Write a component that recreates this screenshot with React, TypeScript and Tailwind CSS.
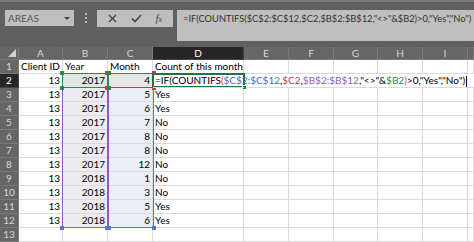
import React from 'react';

const cols = [
  { key: 'A', w: 44 },
  { key: 'B', w: 45 },
  { key: 'C', w: 45 },
  { key: 'D', w: 91 },
  { key: 'E', w: 45 },
  { key: 'F', w: 45 },
  { key: 'G', w: 44 },
  { key: 'H', w: 45 },
  { key: 'I', w: 45 },
  { key: 'J', w: 6 },
];

const rows: [number, number, number, string][] = [
  [13, 2017, 4, ''],
  [13, 2017, 5, 'Yes'],
  [13, 2017, 6, 'Yes'],
  [13, 2017, 7, 'No'],
  [13, 2017, 8, 'No'],
  [13, 2017, 8, 'No'],
  [13, 2017, 12, 'No'],
  [13, 2018, 1, 'No'],
  [13, 2018, 3, 'No'],
  [13, 2018, 5, 'Yes'],
  [13, 2018, 6, 'Yes'],
];

const gridCols = 'grid-cols-[19px_44px_45px_45px_91px_45px_45px_44px_45px_45px_6px]';
const font = { fontFamily: 'Lato, "Liberation Sans", sans-serif' };

const Formula = () => (
  <>
    =IF(COUNTIFS<span className="text-[#d0344a]">(</span>
    <span className="text-[#3b6fd0]">$C$2:$C$12</span>,
    <span className="text-[#d0344a]">$C2</span>,
    <span className="text-[#8a5cc2]">$B$2:$B$12</span>,"&lt;&gt;"&amp;
    <span className="text-[#2e8b3e]">$B2</span>
    <span className="text-[#d0344a]">)</span>&gt;0,"Yes","No")
  </>
);

const Box = ({ left, top, width, height, color }: { left: number; top: number; width: number; height: number; color: string }) => (
  <div className="absolute pointer-events-none" style={{ left, top, width, height }}>
    <div className="absolute inset-0 border" style={{ borderColor: color }} />
    {[
      'left-[-2px] top-[-2px]',
      'right-[-2px] top-[-2px]',
      'left-[-2px] bottom-[-2px]',
      'right-[-2px] bottom-[-2px]',
    ].map((pos) => (
      <div key={pos} className={`absolute w-[4px] h-[4px] ${pos}`} style={{ backgroundColor: color }} />
    ))}
  </div>
);

const Cell = ({ children, className = '' }: { children?: React.ReactNode; className?: string }) => (
  <div className={`h-[14px] border-r border-b border-[#dadada] text-[10px] leading-[13px] px-[2px] text-black whitespace-nowrap ${className}`}>
    {children}
  </div>
);

export default function App() {
  return (
    <div className="w-[474px] h-[242px] overflow-hidden bg-white" style={font}>
      {/* toolbar */}
      <div className="h-[47px] bg-[#606060] border-t-2 border-[#7c7c7c] relative flex items-start pt-[8px] pl-[5px]">
        <div className="w-[69px] h-[16px] bg-[#bfbfbf] flex items-center justify-between pl-[3px] pr-[4px] text-[10px] text-[#555]">
          <span>AREAS</span>
          <span className="w-0 h-0 border-l-[3px] border-r-[3px] border-t-[3px] border-l-transparent border-r-transparent border-t-[#444]" />
        </div>
        <div className="w-[23px] flex flex-col items-center gap-[2px] pt-[3px]">
          <span className="w-[2px] h-[2px] bg-[#bbb]" />
          <span className="w-[2px] h-[2px] bg-[#bbb]" />
          <span className="w-[2px] h-[2px] bg-[#bbb]" />
        </div>
        <div className="w-[76px] h-[17px] bg-[#bfbfbf] flex items-center justify-around px-[4px] text-[#444]">
          <svg width="9" height="9" viewBox="0 0 9 9"><path d="M1 1L8 8M8 1L1 8" stroke="#444" strokeWidth="1.4" /></svg>
          <svg width="11" height="9" viewBox="0 0 11 9"><path d="M1 4.5L4 7.5L10 1" stroke="#444" strokeWidth="1.6" fill="none" /></svg>
          <span className="italic text-[11px] leading-none" style={{ fontFamily: '"Liberation Serif", serif' }}>f<span className="text-[8px]">x</span></span>
        </div>
        <div className="ml-[4px] flex-1 min-w-0 h-[31px] bg-[#bfbfbf] text-[9.3px] leading-[17px] pl-[6px] text-[#333] whitespace-nowrap overflow-hidden">
          =IF(COUNTIFS($C$2:$C$12,$C2,$B$2:$B$12,"&lt;&gt;"&amp;$B2)&gt;0,"Yes","No")
        </div>
      </div>

      {/* sheet */}
      <div className={`relative grid ${gridCols}`}>
        {/* header row */}
        <div className="h-[13px] bg-[#666] border-r border-b border-[#7a7a7a] relative">
          <span className="absolute right-[2px] bottom-[2px] w-0 h-0" style={{ borderBottom: '8px solid #cfcfcf', borderLeft: '8px solid transparent' }} />
        </div>
        {cols.map((c) => (
          <div
            key={c.key}
            className={`h-[13px] border-r border-b text-[10px] leading-[12px] text-center ${c.key === 'D' ? 'bg-[#262626] text-white border-[#444]' : 'bg-[#666] text-[#d6d6d6] border-[#7a7a7a]'}`}
          >
            {c.key !== 'J' ? c.key : ''}
          </div>
        ))}

        {/* row 1 */}
        <div className="h-[14px] bg-[#666] border-r border-b border-[#7a7a7a] text-[10px] leading-[13px] text-center text-[#d6d6d6]">1</div>
        <Cell>Client ID</Cell>
        <Cell>Year</Cell>
        <Cell>Month</Cell>
        <Cell>Count of this month</Cell>
        {cols.slice(4).map((c) => <Cell key={c.key} />)}

        {rows.map((r, i) => {
          const n = i + 2;
          const active = n === 2;
          return (
            <React.Fragment key={n}>
              <div className={`h-[14px] border-r border-b text-[10px] leading-[13px] text-center ${active ? 'bg-[#262626] text-white border-[#444]' : 'bg-[#666] text-[#d6d6d6] border-[#7a7a7a]'}`}>{n}</div>
              <Cell className="text-right">{r[0]}</Cell>
              <Cell className={`text-right ${active ? 'bg-[#e2e6e2]' : 'bg-[#eeebf3]'}`}>{r[1]}</Cell>
              <Cell className={`text-right ${active ? 'bg-[#ebe5ea]' : 'bg-[#e9eef7]'}`}>{r[2]}</Cell>
              {active ? (
                <Cell className="relative z-10 overflow-visible border-r-0 px-[1px] text-[9.3px]">
                  <Formula />
                  <span className="inline-block w-px h-[11px] bg-black align-middle ml-[1px]" />
                </Cell>
              ) : (
                <Cell>{r[3]}</Cell>
              )}
              {cols.slice(4).map((c) => <Cell key={c.key} className={active ? 'border-r-0' : ''} />)}
            </React.Fragment>
          );
        })}

        {/* row 13 */}
        <div className="h-[14px] bg-[#666] border-r border-b border-[#7a7a7a] text-[10px] leading-[13px] text-center text-[#d6d6d6]">13</div>
        {cols.map((c) => <Cell key={c.key} />)}

        {/* reference highlights */}
        <Box left={62} top={26} width={47} height={155} color="#8a5cc2" />
        <Box left={107} top={26} width={47} height={155} color="#4a7cd0" />
        <Box left={107} top={26} width={47} height={15} color="#d0344a" />
        <Box left={62} top={26} width={47} height={15} color="#2e8b3e" />
        <div className="absolute left-[152px] top-[26px] w-[93px] h-[15px] border-2 border-[#217346] pointer-events-none" />
        <div className="absolute left-[242px] top-[38px] w-[5px] h-[5px] bg-[#217346] border border-white pointer-events-none" />
      </div>
    </div>
  );
}
